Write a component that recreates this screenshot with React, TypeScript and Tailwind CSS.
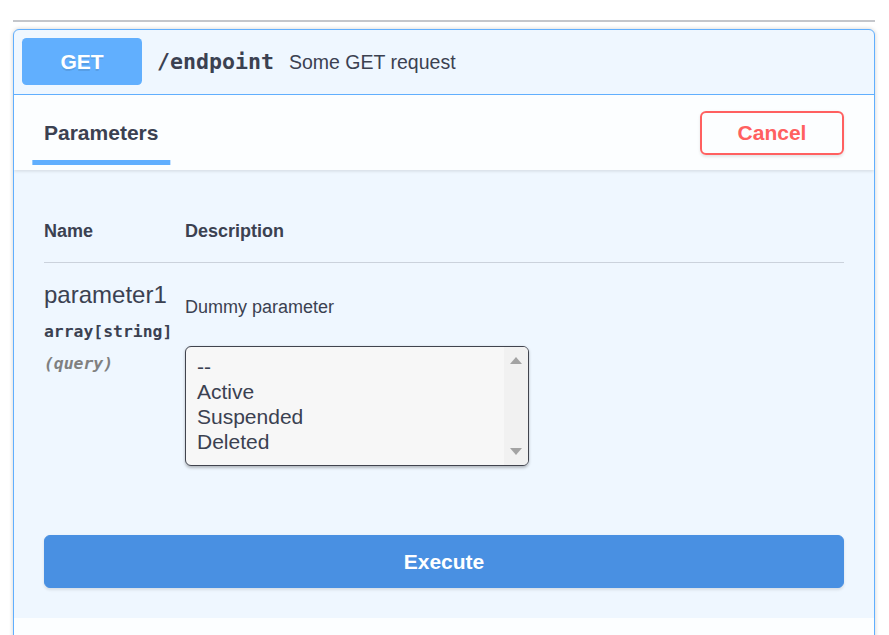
export default function App() {
  const options = ["--", "Active", "Suspended", "Deleted"];
  return (
    <div className="min-h-[635px] overflow-hidden bg-white pl-[13px] pr-[14px] pt-[20px] font-['Liberation_Sans',Arial,sans-serif] text-[#3b4151]">
      <div className="h-[1.5px] bg-[#c4c6cb]" />
      <div className="mt-[7.5px] overflow-hidden rounded-[6px] border border-[#61affe] bg-[#eff7ff] shadow-[0_0_4.5px_rgba(0,0,0,0.19)]">
        {/* summary */}
        <div className="flex items-center border-b border-[#61affe] px-[8px] pt-[8px] pb-[9px]">
          <div className="flex h-[47px] w-[120px] items-center justify-center rounded-[4.5px] bg-[#61affe] text-[21px] font-bold text-white [text-shadow:0_1.5px_0_rgba(0,0,0,0.1)]">
            GET
          </div>
          <span className="px-[15px] font-['DejaVu_Sans_Mono',monospace] text-[21.6px] font-bold leading-[30px]">
            /endpoint
          </span>
          <span className="text-[19.5px] leading-[30px]">Some GET request</span>
        </div>

        {/* section header */}
        <div className="relative z-10 flex h-[75px] items-center justify-between bg-[rgba(255,255,255,0.8)] px-[30px] shadow-[0_1.5px_3px_rgba(0,0,0,0.1)]">
          <div className="relative text-[21px] font-bold leading-[24px]">
            Parameters
            <div className="absolute left-1/2 top-[39px] h-[5px] w-[120%] -translate-x-1/2 bg-[#61affe]" />
          </div>
          <button className="h-[44px] w-[144px] rounded-[6px] border-[2.5px] border-[#ff6060] bg-transparent text-[21px] font-bold text-[#ff6060] shadow-[0_1.5px_3px_rgba(0,0,0,0.1)]">
            Cancel
          </button>
        </div>

        {/* table */}
        <div className="px-[30px] pt-[31px]">
          <div className="flex border-b border-[rgba(59,65,81,0.2)] py-[18px] text-[18px] font-bold leading-[25px]">
            <div className="w-[141px]">Name</div>
            <div>Description</div>
          </div>
          <div className="flex">
            <div className="w-[141px] pt-[17px]">
              <div className="text-[24px] leading-[29px]">parameter1</div>
              <div className="mt-[12px] font-['DejaVu_Sans_Mono',monospace] text-[16.4px] font-bold leading-[22px]">
                array[string]
              </div>
              <div className="mt-[10px] font-['DejaVu_Sans_Mono',monospace] text-[16.4px] font-bold italic leading-[22px] text-[#808080]">
                (query)
              </div>
            </div>
            <div className="pt-[33px]">
              <div className="text-[18px] leading-[22px]">Dummy parameter</div>
              <div className="mt-[28px] flex h-[120px] w-[344px] overflow-hidden rounded-[6px] border border-[#41444e] bg-[#f7f7f7] shadow-[0_1.5px_3px_rgba(0,0,0,0.25)]">
                <div className="flex-1 px-[11px] pt-[7px] text-[21px] leading-[25px]">
                  {options.map((o) => (
                    <div key={o}>{o}</div>
                  ))}
                </div>
                <div className="flex w-[24px] flex-col items-center justify-between bg-[#f1f1f1] py-[10px]">
                  <svg width="12" height="7" viewBox="0 0 12 7">
                    <polygon points="6,0 12,7 0,7" fill="#a3a3a3" />
                  </svg>
                  <svg width="12" height="7" viewBox="0 0 12 7">
                    <polygon points="0,0 12,0 6,7" fill="#a3a3a3" />
                  </svg>
                </div>
              </div>
            </div>
          </div>
        </div>

        {/* execute */}
        <div className="px-[30px] pt-[69px] pb-[30px]">
          <button className="h-[53px] w-full rounded-[6px] border border-[#4990e2] bg-[#4990e2] text-[21px] font-bold text-white shadow-[0_1.5px_3px_rgba(0,0,0,0.1)]">
            Execute
          </button>
        </div>
        <div className="h-[40px] bg-[rgba(255,255,255,0.8)]" />
      </div>
    </div>
  );
}
